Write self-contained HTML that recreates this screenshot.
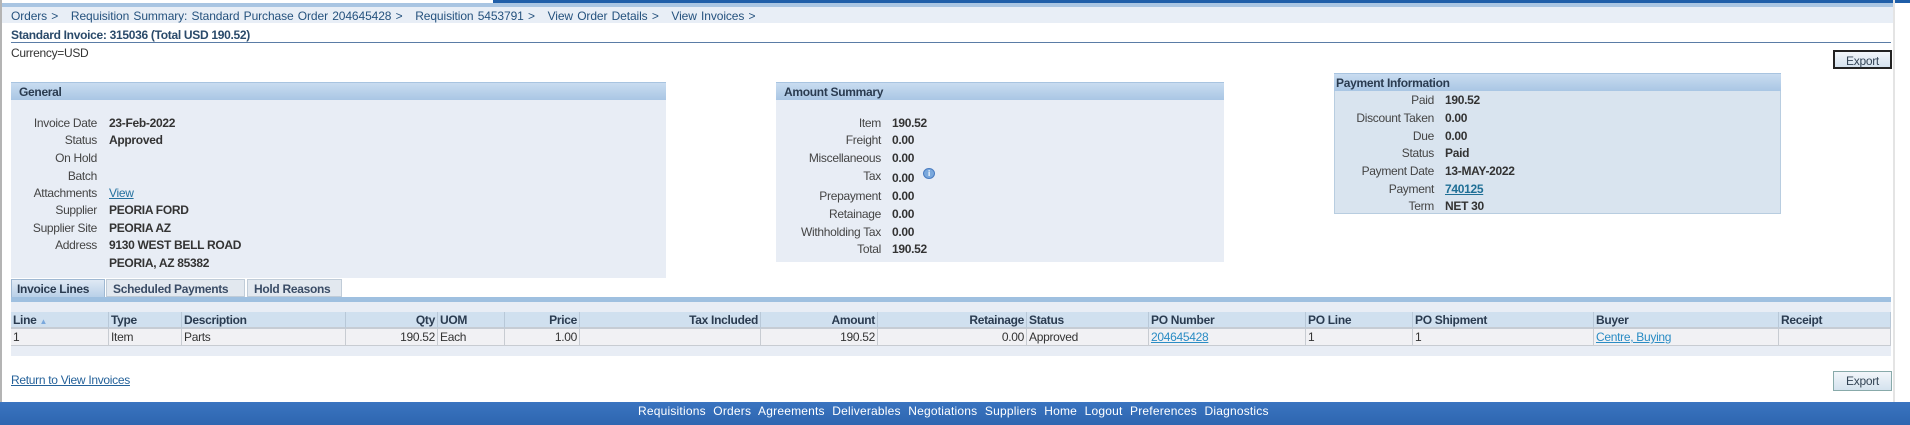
<!DOCTYPE html>
<html><head><meta charset="utf-8"><style>
*{margin:0;padding:0;box-sizing:border-box}
body{width:1910px;height:425px;position:relative;overflow:hidden;background:#fff;font-family:"Liberation Sans",sans-serif;font-size:12px;color:#333;letter-spacing:-0.3px}
.a{position:absolute;white-space:nowrap}
.hdr{position:absolute;height:18px;background:linear-gradient(#c9dcf0,#a9c6e4);border-top:1px solid #a8c4e0;font-weight:bold;color:#2a3b50;padding:2px 8px;font-size:12px}
.lbl{position:absolute;text-align:right;color:#444}
.val{position:absolute;font-weight:bold;color:#333}
a{color:#24719f;text-decoration:underline}
.th{position:absolute;top:312px;height:17px;background:#d0e0ef;border-right:1px solid #b8c8d8;border-bottom:2px solid #c6ccd4;font-weight:bold;color:#2a3b50;padding:1px 2px}
.td{position:absolute;top:329px;height:17px;background:#f1f1f4;border-right:1px solid #c8ccd2;border-bottom:1px solid #c8ccd2;padding:1px 2px;color:#333}
.r{text-align:right}
.btn{position:absolute;background:linear-gradient(#f2f6fa,#d4e2ee);border:1px solid #8aa;color:#345;font-size:12px;text-align:center;padding-top:2px}
</style></head><body>
<div class="a" style="left:0;top:0;width:1910px;height:3px;background:#fff"></div>
<div class="a" style="left:493px;top:0;width:1417px;height:3px;background:#1f5ea8"></div>
<div class="a" style="left:0;top:3px;width:1894px;height:4px;background:#a9c5e2"></div>
<div class="a" style="left:0;top:7px;width:1894px;height:16px;background:#e8eef6"></div>
<div class="a" style="left:0;top:0;width:2px;height:402px;background:#b4b4b4"></div>
<div class="a" style="left:1893px;top:0;width:2px;height:402px;background:#e4e4e4"></div>
<div class="a" style="left:11px;top:9px;color:#25527e;word-spacing:1px;letter-spacing:-0.1px">Orders &gt; &nbsp; Requisition Summary: Standard Purchase Order 204645428 &gt; &nbsp; Requisition 5453791 &gt; &nbsp; View Order Details &gt; &nbsp; View Invoices &gt;</div>
<div class="a" style="left:11px;top:28px;font-weight:bold;color:#2a4a6a">Standard Invoice: 315036 (Total USD 190.52)</div>
<div class="a" style="left:11px;top:42px;width:1880px;height:1px;background:#5a7ca6"></div>
<div class="a" style="left:11px;top:46px;color:#333">Currency=USD</div>
<div class="btn" style="left:1833px;top:50px;width:59px;height:19px;border:2px solid #222">Export</div>

<!-- General -->
<div class="a" style="left:11px;top:82px;width:655px;height:196px;background:#e8edf5"></div>
<div class="hdr" style="left:11px;top:82px;width:655px">General</div>
<div class="lbl" style="left:0;top:116px;width:97px">Invoice Date</div><div class="val" style="left:109px;top:116px">23-Feb-2022</div>
<div class="lbl" style="left:0;top:133px;width:97px">Status</div><div class="val" style="left:109px;top:133px">Approved</div>
<div class="lbl" style="left:0;top:151px;width:97px">On Hold</div>
<div class="lbl" style="left:0;top:169px;width:97px">Batch</div>
<div class="lbl" style="left:0;top:186px;width:97px">Attachments</div><div class="a" style="left:109px;top:186px"><a>View </a></div>
<div class="lbl" style="left:0;top:203px;width:97px">Supplier</div><div class="val" style="left:109px;top:203px">PEORIA FORD</div>
<div class="lbl" style="left:0;top:221px;width:97px">Supplier Site</div><div class="val" style="left:109px;top:221px">PEORIA AZ</div>
<div class="lbl" style="left:0;top:238px;width:97px">Address</div><div class="val" style="left:109px;top:238px">9130 WEST BELL ROAD</div>
<div class="val" style="left:109px;top:256px">PEORIA, AZ 85382</div>

<!-- Amount summary -->
<div class="a" style="left:776px;top:82px;width:448px;height:180px;background:#e8edf5"></div>
<div class="hdr" style="left:776px;top:82px;width:448px">Amount Summary</div>
<div class="lbl" style="left:776px;top:116px;width:105px">Item</div><div class="val" style="left:892px;top:116px">190.52</div>
<div class="lbl" style="left:776px;top:133px;width:105px">Freight</div><div class="val" style="left:892px;top:133px">0.00</div>
<div class="lbl" style="left:776px;top:151px;width:105px">Miscellaneous</div><div class="val" style="left:892px;top:151px">0.00</div>
<div class="lbl" style="left:776px;top:169px;width:105px">Tax</div><div class="val" style="left:892px;top:171px">0.00</div>
<div class="a" style="left:923px;top:168px;width:12px;height:11px;border-radius:50%;background:#7aa8dc;border:1px solid #4a7cc0;color:#fff;font-size:8px;font-weight:bold;text-align:center;line-height:9px">i</div>
<div class="lbl" style="left:776px;top:189px;width:105px">Prepayment</div><div class="val" style="left:892px;top:189px">0.00</div>
<div class="lbl" style="left:776px;top:207px;width:105px">Retainage</div><div class="val" style="left:892px;top:207px">0.00</div>
<div class="lbl" style="left:776px;top:225px;width:105px">Withholding Tax</div><div class="val" style="left:892px;top:225px">0.00</div>
<div class="lbl" style="left:776px;top:242px;width:105px">Total</div><div class="val" style="left:892px;top:242px">190.52</div>

<!-- Payment -->
<div class="a" style="left:1334px;top:73px;width:447px;height:141px;background:#d9e4ef;border:1px solid #b8cde0"></div>
<div class="hdr" style="left:1334px;top:73px;width:447px;padding-left:2px">Payment Information</div>
<div class="lbl" style="left:1334px;top:93px;width:100px">Paid</div><div class="val" style="left:1445px;top:93px">190.52</div>
<div class="lbl" style="left:1334px;top:111px;width:100px">Discount Taken</div><div class="val" style="left:1445px;top:111px">0.00</div>
<div class="lbl" style="left:1334px;top:129px;width:100px">Due</div><div class="val" style="left:1445px;top:129px">0.00</div>
<div class="lbl" style="left:1334px;top:146px;width:100px">Status</div><div class="val" style="left:1445px;top:146px">Paid</div>
<div class="lbl" style="left:1334px;top:164px;width:100px">Payment Date</div><div class="val" style="left:1445px;top:164px">13-MAY-2022</div>
<div class="lbl" style="left:1334px;top:182px;width:100px">Payment</div><div class="val" style="left:1445px;top:182px"><a style="color:#1f6f96">740125</a></div>
<div class="lbl" style="left:1334px;top:199px;width:100px">Term</div><div class="val" style="left:1445px;top:199px">NET 30</div>

<!-- tabs -->
<div class="a" style="left:11px;top:279px;width:94px;height:19px;background:linear-gradient(#dfe9f4,#b9d0e8);border:1px solid #9fb8d2;font-weight:bold;color:#2a3b50;padding:2px 5px">Invoice Lines</div>
<div class="a" style="left:106px;top:279px;width:139px;height:18px;background:#e2e8ef;border:1px solid #c0ccd8;font-weight:bold;color:#3a4c66;padding:2px 6px">Scheduled Payments</div>
<div class="a" style="left:247px;top:279px;width:95px;height:18px;background:#e2e8ef;border:1px solid #c0ccd8;font-weight:bold;color:#3a4c66;padding:2px 6px">Hold Reasons</div>
<div class="a" style="left:11px;top:297px;width:1880px;height:5px;background:#9fc0e0"></div>
<div class="a" style="left:11px;top:302px;width:1880px;height:10px;background:#e8edf5"></div>
<div class="a" style="left:11px;top:346px;width:1880px;height:10px;background:#e8edf5"></div>

<div class="th" style="left:11px;width:98px">Line <span style="color:#7aa8dc;font-size:8px">▲</span></div>
<div class="th" style="left:109px;width:73px">Type</div>
<div class="th" style="left:182px;width:164px">Description</div>
<div class="th r" style="left:346px;width:92px">Qty</div>
<div class="th" style="left:438px;width:67px">UOM</div>
<div class="th r" style="left:505px;width:75px">Price</div>
<div class="th r" style="left:580px;width:181px">Tax Included</div>
<div class="th r" style="left:761px;width:117px">Amount</div>
<div class="th r" style="left:878px;width:149px">Retainage</div>
<div class="th" style="left:1027px;width:122px">Status</div>
<div class="th" style="left:1149px;width:157px">PO Number</div>
<div class="th" style="left:1306px;width:107px">PO Line</div>
<div class="th" style="left:1413px;width:181px">PO Shipment</div>
<div class="th" style="left:1594px;width:185px">Buyer</div>
<div class="th" style="left:1779px;width:112px">Receipt</div>

<div class="td" style="left:11px;width:98px">1</div>
<div class="td" style="left:109px;width:73px">Item</div>
<div class="td" style="left:182px;width:164px">Parts</div>
<div class="td r" style="left:346px;width:92px">190.52</div>
<div class="td" style="left:438px;width:67px">Each</div>
<div class="td r" style="left:505px;width:75px">1.00</div>
<div class="td" style="left:580px;width:181px"></div>
<div class="td r" style="left:761px;width:117px">190.52</div>
<div class="td r" style="left:878px;width:149px">0.00</div>
<div class="td" style="left:1027px;width:122px">Approved</div>
<div class="td" style="left:1149px;width:157px"><a style="color:#2a8cc4">204645428</a></div>
<div class="td" style="left:1306px;width:107px">1</div>
<div class="td" style="left:1413px;width:181px">1</div>
<div class="td" style="left:1594px;width:185px"><a style="color:#2a8cc4">Centre, Buying</a></div>
<div class="td" style="left:1779px;width:112px"></div>

<div class="a" style="left:11px;top:373px"><a style="color:#25629a">Return to View Invoices</a></div>
<div class="btn" style="left:1833px;top:371px;width:59px;height:20px">Export</div>

<div class="a" style="left:0;top:402px;width:1910px;height:23px;background:linear-gradient(#3a74c0,#2e66b0)"></div>
<div class="a" style="left:638px;top:404px;width:630px;text-align:center;color:#fff;word-spacing:4px;letter-spacing:0.2px">Requisitions Orders Agreements Deliverables Negotiations Suppliers Home Logout Preferences Diagnostics</div>
</body></html>
